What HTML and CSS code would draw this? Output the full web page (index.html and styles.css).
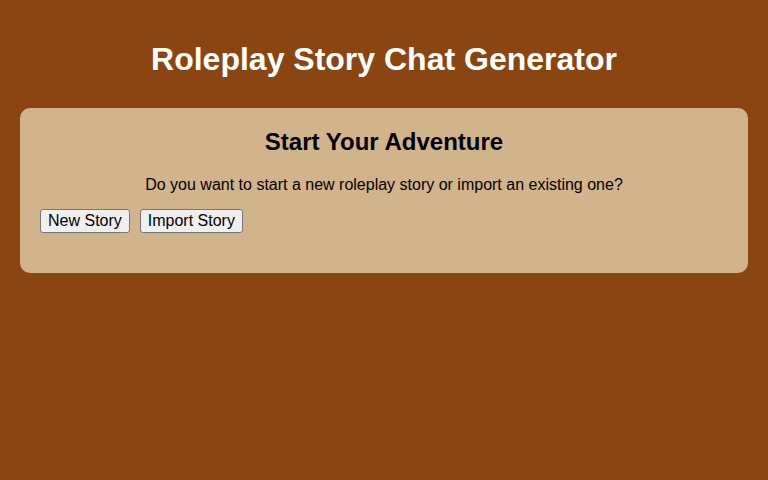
FILE: index.html
```html
<!DOCTYPE html>
<html lang="en">
<head>
    <meta charset="UTF-8">
    <meta name="viewport" content="width=device-width, initial-scale=1.0">
    <title>Roleplay Story Chat Generator</title>
    <link rel="stylesheet" href="styles.css">
</head>
<body>
    <h1>Roleplay Story Chat Generator</h1>

    <div class="start-panel">
        <h2>Start Your Adventure</h2>
        <p>Do you want to start a new roleplay story or import an existing one?</p>
        <div class="start-actions">
            <button id="new-story">New Story</button>
            <button id="import-story">Import Story</button>
        </div>
    </div>
</body>
</html>
```

FILE: styles.css
```css
body {
    font-family: "Liberation Sans", Arial, sans-serif;
    background-color: #8b4513;
    margin: 0;
    padding: 20px;
}
h1 {
    color: white;
    text-align: center;
    font-size: 32px;
    margin: 21px 0 30px;
}
/* Main panel */
.start-panel {
    background-color: #d2b48c;
    border-radius: 10px;
    padding: 20px;
}
.start-panel h2 {
    text-align: center;
    font-size: 24px;
    margin: 0 0 20px;
}
.start-panel p { text-align: center; font-size: 16px; margin: 0 0 15px; }
.start-actions { display: flex; gap: 10px; margin-bottom: 20px; }
.start-actions button {
    font-family: inherit;
    font-size: 16px;
    padding: 2px 7px;
    background-color: #efefef;
    border: 1px solid #767676;
    border-radius: 3px;
    color: black;
}
```
